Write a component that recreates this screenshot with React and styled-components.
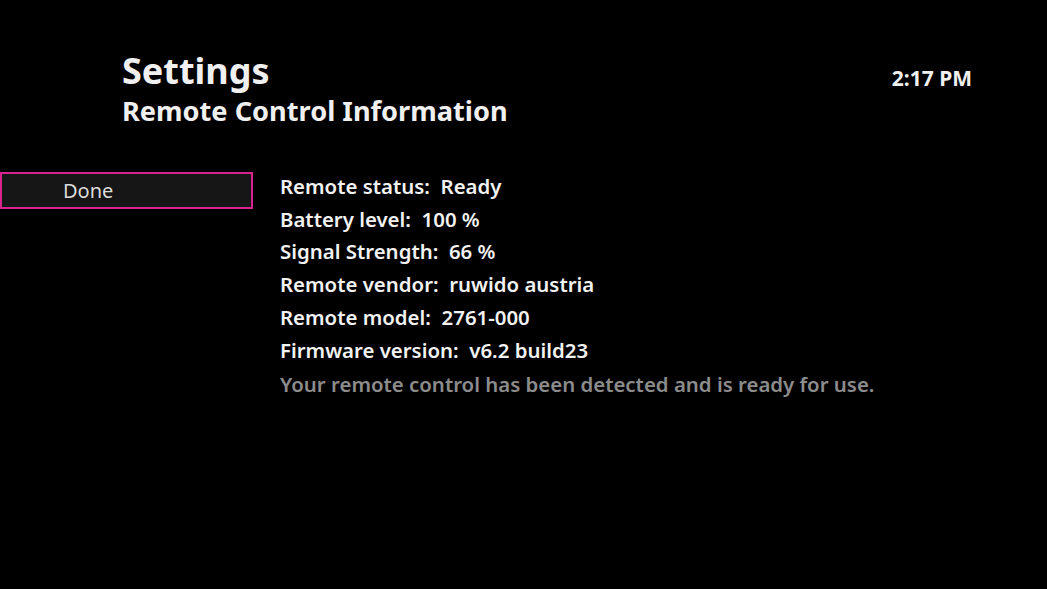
import styled, { createGlobalStyle } from 'styled-components';

const GlobalStyle = createGlobalStyle`
  html, body {
    margin: 0;
    padding: 0;
    background: #000;
  }
  body {
    font-family: "Noto Sans", "Open Sans", sans-serif;
    color: #f2f2f2;
  }
`;

const info = [
  ['Remote status', 'Ready'],
  ['Battery level', '100 %'],
  ['Signal Strength', '66 %'],
  ['Remote vendor', 'ruwido austria'],
  ['Remote model', '2761-000'],
  ['Firmware version', 'v6.2 build23'],
];

const App = () => (
  <>
    <GlobalStyle />
    <Screen>
      <Header>
        <Titles>
          <Title>Settings</Title>
          <Subtitle>Remote Control Information</Subtitle>
        </Titles>
        <Clock>2:17 PM</Clock>
      </Header>
      <Body>
        <Menu>
          <MenuButton $focused>Done</MenuButton>
        </Menu>
        <InfoList>
          {info.map(([label, value]) => (
            <InfoRow key={label}>
              {label}:&nbsp; {value}
            </InfoRow>
          ))}
          <Note>Your remote control has been detected and is ready for use.</Note>
        </InfoList>
      </Body>
    </Screen>
  </>
);

const Screen = styled.div`
  width: 1047px;
  height: 589px;
  background: #000;
  overflow: hidden;
`;

const Header = styled.div`
  display: flex;
  justify-content: space-between;
  align-items: flex-start;
  padding: 48px 75px 0 122px;
`;

const Titles = styled.div`
  display: flex;
  flex-direction: column;
`;

const Title = styled.h1`
  margin: 0;
  font-size: 36px;
  line-height: 46px;
  font-weight: 700;
  color: #f0f0f0;
`;

const Subtitle = styled.h2`
  margin: 0;
  font-size: 27.2px;
  line-height: 34px;
  font-weight: 700;
  color: #f0f0f0;
`;

const Clock = styled.div`
  margin-top: 16px;
  font-size: 21px;
  font-weight: 700;
  color: #f0f0f0;
`;

const Body = styled.div`
  display: flex;
  align-items: flex-start;
  gap: 27px;
  margin-top: 44px;
`;

const Menu = styled.div`
  width: 253px;
  display: flex;
  flex-direction: column;
`;

const MenuButton = styled.div`
  box-sizing: border-box;
  height: 37px;
  display: flex;
  align-items: center;
  padding-left: 61px;
  background: #161616;
  border: 2px solid ${({ $focused }) => ($focused ? '#d9238f' : 'transparent')};
  font-size: 20px;
  color: #dcdcdc;
`;

const InfoList = styled.div`
  display: flex;
  flex-direction: column;
  margin-top: -2px;
`;

const InfoRow = styled.div`
  font-size: 20.4px;
  line-height: 32.7px;
  font-weight: 600;
  color: #f2f2f2;
  white-space: pre;
`;

const Note = styled(InfoRow)`
  margin-top: 2px;
  color: #8c8c8c;
`;

export default App;
